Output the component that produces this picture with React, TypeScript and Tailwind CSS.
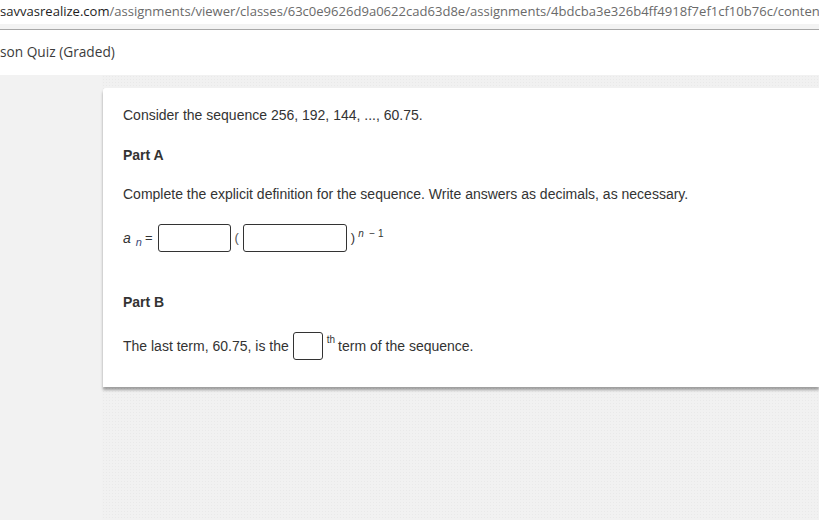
import React from "react";

function Box({ w }: { w: string }) {
  return <span className={`inline-block h-[28px] ${w} rounded-[3px] border border-[#333] bg-white`} />;
}

export default function App() {
  return (
    <div className="w-[819px] h-[520px] overflow-hidden bg-white flex flex-col">
      {/* URL bar */}
      <div className="h-[24px] flex items-center whitespace-nowrap overflow-hidden text-[13.05px] font-['Open_Sans',sans-serif]">
        <span className="text-[#1e1e1e]">savvasrealize.com</span>
        <span className="text-[#6a6a6a]">/assignments/viewer/classes/63c0e9626d9a0622cad63d8e/assignments/4bdcba3e326b4ff4918f7ef1cf10b76c/content</span>
      </div>
      <div className="h-[6px] bg-[#f3f3f3] border-b border-[#a8a8a8]" />
      {/* Title bar */}
      <div className="h-[45px] flex items-center text-[13.7px] text-[#3c3c3c] font-['Open_Sans',sans-serif] whitespace-nowrap">
        son Quiz (Graded)
      </div>
      {/* Content */}
      <div className="flex-1 flex">
        <div className="w-[102px] bg-[#f2f2f2]" />
        <div className="flex-1 bg-[#f1f1f1] bg-[radial-gradient(#e9e9e9_1px,transparent_1px)] bg-[size:3px_3px] pt-[13px]">
          <div className="ml-[1px] h-[299px] bg-white rounded-tl-[3px] shadow-[0_3px_3px_rgba(0,0,0,0.35)] pl-[20px] pt-[17px] font-['Liberation_Sans',Arial,sans-serif] text-[14px] leading-[20px] text-[#333]">
            <p>Consider the sequence 256, 192, 144, ..., 60.75.</p>
            <p className="mt-[20px] font-bold">Part A</p>
            <p className="mt-[19px]">Complete the explicit definition for the sequence. Write answers as decimals, as necessary.</p>
            <div className="mt-[20px] flex items-center h-[28px]">
              <span className="italic text-[14px] text-[#333]">a</span>
              <span className="italic text-[11px] text-[#3c4a7a] ml-[5px] mt-[8px]">n</span>
              <span className="ml-[3px] mr-[5px] text-[13px]">=</span>
              <Box w="w-[73px]" />
              <span className="ml-[4px] mr-[4px] text-[13px] text-[#555]">(</span>
              <Box w="w-[104px]" />
              <span className="ml-[4px] text-[13px] text-[#333]">)</span>
              <span className="ml-[3px] -mt-[8px] text-[10px] text-[#333] whitespace-pre">
                <span className="italic">n</span>{"  − 1"}
              </span>
            </div>
            <p className="mt-[40px] font-bold">Part B</p>
            <div className="mt-[20px] flex items-center h-[28px]">
              <span>The last term, 60.75, is the</span>
              <span className="ml-[4px] flex"><Box w="w-[30px]" /></span>
              <span className="ml-[4px] -mt-[12px] text-[10px]">th</span>
              <span className="ml-[3px]">term of the sequence.</span>
            </div>
          </div>
        </div>
      </div>
    </div>
  );
}
